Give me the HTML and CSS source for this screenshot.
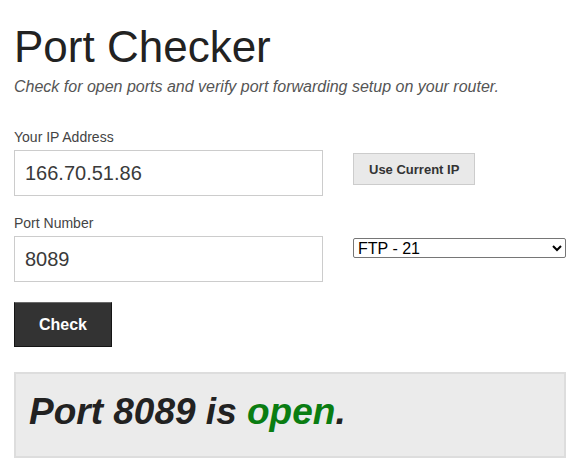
FILE: index.html
```html
<!DOCTYPE html>
<html lang="en">
<head>
<meta charset="utf-8">
<title>Port Checker</title>
<link rel="stylesheet" href="styles.css">
</head>
<body>
<main class="page">
  <h1 class="title">Port Checker</h1>
  <p class="subtitle">Check for open ports and verify port forwarding setup on your router.</p>

  <form class="checker">
    <div class="row">
      <div class="field">
        <label class="label" for="ip">Your IP Address</label>
        <input class="text-input" id="ip" type="text" value="166.70.51.86">
      </div>
      <div class="side">
        <button type="button" class="btn-light">Use Current IP</button>
      </div>
    </div>

    <div class="row">
      <div class="field">
        <label class="label" for="port">Port Number</label>
        <input class="text-input" id="port" type="text" value="8089">
      </div>
      <div class="side">
        <select class="preset">
          <option>FTP - 21</option>
          <option>SSH - 22</option>
          <option>HTTP - 80</option>
          <option>HTTPS - 443</option>
        </select>
      </div>
    </div>

    <button type="button" class="btn-dark">Check</button>
  </form>

  <div class="result">
    <h2 class="result-text">Port 8089 is <span class="open">open</span>.</h2>
  </div>
</main>
</body>
</html>
```

FILE: styles.css
```css
html, body {
  margin: 0;
  padding: 0;
  background: #ffffff;
}

body {
  font-family: "Liberation Sans", Arial, sans-serif;
  color: #222222;
}

.page {
  width: 552px;
  padding: 22px 14px 0;
}

.title {
  margin: 0;
  font-size: 44px;
  line-height: 50px;
  font-weight: normal;
  color: #222222;
}

.subtitle {
  margin: 6px 0 0;
  font-size: 16px;
  line-height: 18px;
  font-style: italic;
  color: #555555;
}

.checker {
  margin-top: 33px;
}

.row {
  display: grid;
  grid-template-columns: 309px 213px;
  column-gap: 30px;
  margin-bottom: 19px;
}

.row + .row {
  margin-bottom: 20px;
}

.field {
  display: flex;
  flex-direction: column;
}

.label {
  display: block;
  font-size: 14px;
  line-height: 16px;
  color: #444444;
  margin-bottom: 5px;
}

.text-input {
  box-sizing: border-box;
  width: 309px;
  height: 46px;
  margin: 0;
  padding: 10px 10px;
  border: 1px solid #cccccc;
  border-radius: 0;
  font-family: "Liberation Sans", Arial, sans-serif;
  font-size: 20px;
  line-height: 24px;
  color: #3a3a3a;
  background: #ffffff;
  outline: none;
}

.side {
  padding-top: 23px;
}

.btn-light {
  box-sizing: border-box;
  margin: 1px 0 0;
  height: 32px;
  padding: 0 15px;
  background: #e9e9e9;
  border: 1px solid #cccccc;
  border-radius: 0;
  font-family: "Liberation Sans", Arial, sans-serif;
  font-size: 13px;
  font-weight: bold;
  color: #333333;
}

.preset {
  box-sizing: border-box;
  width: 213px;
  height: 20px;
  margin: 0;
  font-family: "Liberation Sans", Arial, sans-serif;
  font-size: 16px;
  color: #000000;
  background: #ffffff;
  border: 1px solid #767676;
  border-radius: 2px;
}

.btn-dark {
  box-sizing: border-box;
  display: block;
  height: 45px;
  width: 98px;
  margin: 0;
  padding: 0;
  background: #333333;
  border: 1px solid #151515;
  border-top-color: #6a6a6a;
  border-radius: 0;
  font-family: "Liberation Sans", Arial, sans-serif;
  font-size: 16px;
  font-weight: bold;
  color: #ffffff;
}

.result {
  margin-top: 25px;
  background: #ebebeb;
  border: 2px solid #dddddd;
  padding: 17px 13px 23px;
}

.result-text {
  margin: 0;
  font-size: 37px;
  line-height: 42px;
  font-weight: bold;
  font-style: italic;
  color: #222222;
}

.open {
  color: #0a7d12;
}
```
